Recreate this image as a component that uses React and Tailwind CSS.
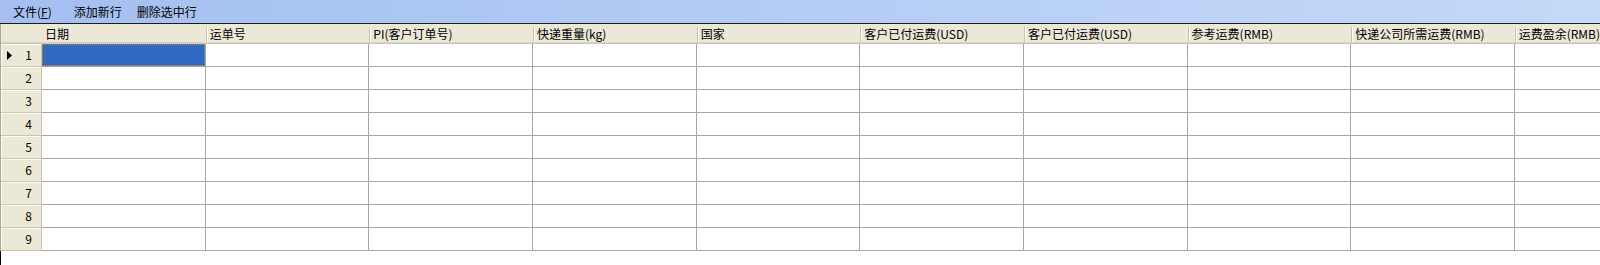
import React from 'react';

const columns = [
  '日期',
  '运单号',
  'PI(客户订单号)',
  '快递重量(kg)',
  '国家',
  '客户已付运费(USD)',
  '客户已付运费(USD)',
  '参考运费(RMB)',
  '快递公司所需运费(RMB)',
  '运费盈余(RMB)',
];

const rows = [1, 2, 3, 4, 5, 6, 7, 8, 9];

// row header + 9 fixed columns, the last one runs off the right edge
const gridCols = 'grid grid-cols-[41px_repeat(9,163.67px)_1fr]';

const MenuBar = () => (
  <div className="h-[23px] flex items-center bg-gradient-to-r from-[#a4bff0] via-[#b4cdf5] to-[#c5d9f8] text-[12px] text-black">
    <span className="ml-[13px]">
      文件(<span className="underline">F</span>)
    </span>
    <span className="ml-[22px]">添加新行</span>
    <span className="ml-[15px]">删除选中行</span>
  </div>
);

const HeaderRow = () => (
  <div className={`${gridCols} h-[20px] bg-[#ebe8d7] shadow-[inset_0_-1px_0_#cbc7b8,inset_0_-2px_0_#d8d4c4] overflow-hidden`}>
    <div />
    {columns.map((name, i) => (
      <div key={i} className="flex items-center overflow-hidden whitespace-nowrap">
        {i > 0 && (
          <>
            <span className="w-px h-[15px] bg-[#c5c2b2]" />
            <span className="w-px h-[15px] bg-white" />
          </>
        )}
        <span className={i > 0 ? 'ml-[2px]' : 'ml-[3px]'}>{name}</span>
      </div>
    ))}
  </div>
);

const DataRow = ({ n }) => (
  <div className={`${gridCols} h-[23px]`}>
    <div className="relative flex items-center justify-end pr-[9px] bg-[#ebe8d7] border-b border-r border-[#c9c5b5] shadow-[inset_1px_1px_0_#fbfaf6]">
      {n === 1 && (
        <svg className="absolute left-[6px] top-[7px]" width="5" height="9" viewBox="0 0 5 9">
          <path d="M0 0 L5 4.5 L0 9 Z" fill="#000" />
        </svg>
      )}
      <span>{n}</span>
    </div>
    {columns.map((_, i) => (
      <div
        key={i}
        className={`border-b border-[#aca899] bg-white ${i < columns.length - 1 ? 'border-r' : ''}`}
      >
        {n === 1 && i === 0 && (
          <div className="h-full bg-[#316ac5] border border-dotted border-[#d08a2a]" />
        )}
      </div>
    ))}
  </div>
);

const App = () => {
  return (
    <div
      className="w-[1600px] h-[265px] bg-white overflow-hidden flex flex-col text-[12px] leading-none text-black"
      style={{ fontFamily: '"Noto Sans CJK SC", "Liberation Sans", sans-serif' }}
    >
      <MenuBar />
      <div className="flex-1 flex flex-col border-t border-[#1d1d1d]">
        <div className="border-l border-[#aca899]">
          <HeaderRow />
          {rows.map((n) => (
            <DataRow key={n} n={n} />
          ))}
        </div>
        <div className="flex-1 border-l border-black" />
      </div>
    </div>
  );
};

export default App;
